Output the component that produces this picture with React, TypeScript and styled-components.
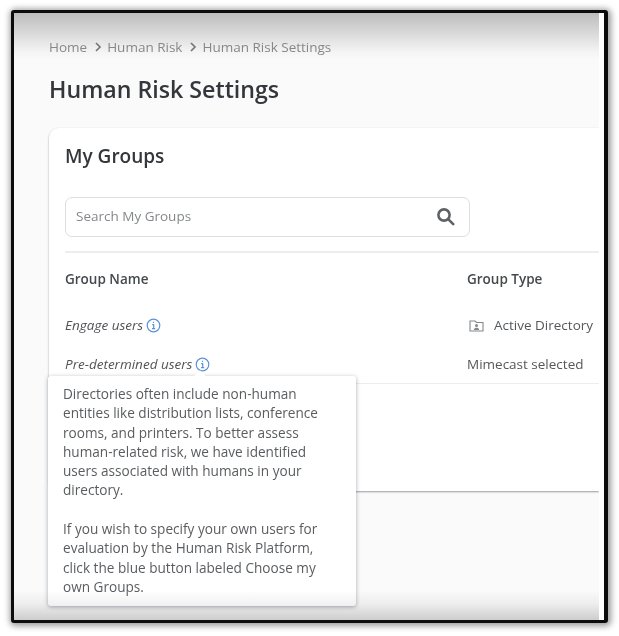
import React from "react";
import styled, { createGlobalStyle } from "styled-components";

const Global = createGlobalStyle`
  html, body { margin: 0; padding: 0; background: #fff; }
  body { width: 619px; height: 636px; overflow: hidden; font-family: "Open Sans", "Liberation Sans", sans-serif; }
`;

const Frame = styled.div`
  box-sizing: border-box;
  margin: 10px 0 0 11px;
  width: 597px;
  height: 613px;
  background: #fff;
  border-style: solid;
  border-color: #0c0c0c;
  border-width: 3px 4px 3px 3px;
  box-shadow: 1px 1px 6px 2px rgba(0, 0, 0, 0.4);
  border-radius: 3px;
  filter: blur(0.6px);
`;

const Screen = styled.div`
  position: relative;
  box-sizing: border-box;
  height: 100%;
  margin-right: 5px;
  overflow: hidden;
  padding: 24px 0 0 35px;
  background: linear-gradient(
    to bottom,
    #bdbdbd 0,
    #d9d9d9 20px,
    #f3f3f3 38px,
    #fafafa 46px
  );
  &::after {
    content: "";
    position: absolute;
    left: 0;
    right: 0;
    bottom: 0;
    height: 30px;
    background: linear-gradient(to bottom, rgba(0, 0, 0, 0), rgba(0, 0, 0, 0.05) 14px, rgba(0, 0, 0, 0.18));
  }
`;

const Crumbs = styled.nav`
  display: flex;
  align-items: center;
  height: 20px;
  font-size: 13.5px;
  color: #85888b;
`;

const CrumbSep = styled.svg`
  width: 9px;
  height: 10px;
  margin: 0 4px 0 7px;
  fill: none;
  stroke: #74777a;
  stroke-width: 1.7;
`;

const Title = styled.h1`
  margin: 15px 0 0;
  height: 38px;
  font-size: 23.2px;
  line-height: 34px;
  font-weight: 600;
  color: #33363a;
`;

const Card = styled.section`
  box-sizing: border-box;
  height: 363px;
  margin-top: 18px;
  padding: 15px 0 0 16px;
  background: #fff;
  border-radius: 10px 0 0 10px;
  box-shadow: 0 1px 2px rgba(60, 64, 70, 0.5);
`;

const CardTitle = styled.h2`
  margin: 0;
  font-size: 19px;
  line-height: 26px;
  font-weight: 600;
  color: #33363a;
`;

const Search = styled.div`
  box-sizing: border-box;
  display: flex;
  align-items: center;
  justify-content: space-between;
  width: 405px;
  height: 40px;
  margin-top: 28px;
  padding: 0 14px 2px 10px;
  border: 1px solid #dcdee0;
  border-radius: 7px;
  font-size: 13.5px;
  color: #85888b;
`;

const SearchIcon = styled.svg`
  width: 19px;
  height: 19px;
  fill: none;
  stroke: #5f6265;
  stroke-width: 2.6;
  stroke-linecap: round;
`;

const Rule = styled.div`
  height: 2px;
  margin-top: 14px;
  background: #eceded;
`;

const Row = styled.div<{ $height: number }>`
  display: grid;
  grid-template-columns: 402px 1fr;
  align-items: center;
  height: ${(p) => p.$height}px;
  font-size: 13.5px;
  color: #55585b;
  white-space: nowrap;
`;

const HeadCell = styled.div`
  font-size: 13.5px;
  font-weight: 600;
  color: #46494c;
`;

const NameCell = styled.div`
  display: flex;
  align-items: center;
  gap: 3px;
  font-style: italic;
  font-size: 13.5px;
  color: #505356;
`;

const TypeCell = styled.div`
  display: flex;
  align-items: center;
  gap: 10px;
  padding-left: 2px;
`;

const InfoIcon = styled.svg`
  width: 15px;
  height: 15px;
  fill: none;
  stroke: #5d93d6;
`;

const FolderIcon = styled.svg`
  width: 15px;
  height: 13px;
  fill: none;
  stroke: #85888b;
`;

const BottomRule = styled.div`
  height: 1px;
  background: #ededee;
`;

const Tooltip = styled.div`
  position: absolute;
  left: 34px;
  top: 363px;
  box-sizing: border-box;
  width: 308px;
  height: 230px;
  padding: 8px 14px 0 15px;
  background: #fff;
  border-radius: 3px;
  box-shadow: 0 1px 4px rgba(60, 70, 90, 0.45);
  font-size: 13.6px;
  line-height: 19.3px;
  color: #5a5d60;
  &::before {
    content: "";
    position: absolute;
    left: 148px;
    top: -4px;
    width: 8px;
    height: 8px;
    background: #fff;
    transform: rotate(45deg);
  }
`;

const TipText = styled.p`
  position: relative;
  margin: 0 0 19.3px;
`;

const Info = () => (
  <InfoIcon viewBox="0 0 15 15">
    <circle cx="7.5" cy="7.5" r="6.3" strokeWidth="1.2" />
    <path d="M6.2 6.6h1.5v4M6 10.7h3.2M7.5 3.7v1.4" strokeWidth="1.2" />
  </InfoIcon>
);

const Sep = () => (
  <CrumbSep viewBox="0 0 9 10">
    <path d="M2 1l4 4-4 4" />
  </CrumbSep>
);

export default function App() {
  return (
    <>
      <Global />
      <Frame>
        <Screen>
          <Crumbs>
            Home
            <Sep />
            Human Risk
            <Sep />
            Human Risk Settings
          </Crumbs>
          <Title>Human Risk Settings</Title>
          <Card>
            <CardTitle>My Groups</CardTitle>
            <Search>
              Search My Groups
              <SearchIcon viewBox="0 0 19 19">
                <circle cx="8" cy="8" r="5.6" />
                <path d="M12.4 12.4l4.8 4.8" />
              </SearchIcon>
            </Search>
            <Rule />
            <Row $height={52}>
              <HeadCell>Group Name</HeadCell>
              <HeadCell>Group Type</HeadCell>
            </Row>
            <Row $height={40}>
              <NameCell>
                Engage users
                <Info />
              </NameCell>
              <TypeCell>
                <FolderIcon viewBox="0 0 15 13">
                  <path d="M1 2v10h13V3.5H7.5L6 2z" strokeWidth="1.1" />
                  <circle cx="7.5" cy="6.5" r="1.5" fill="#85888b" stroke="none" />
                  <path d="M4.8 11c.3-1.9 1.5-2.2 2.7-2.2s2.4.3 2.7 2.2z" fill="#85888b" stroke="none" />
                </FolderIcon>
                Active Directory
              </TypeCell>
            </Row>
            <Row $height={38}>
              <NameCell>
                Pre-determined users
                <Info />
              </NameCell>
              <div>Mimecast selected</div>
            </Row>
            <BottomRule />
          </Card>
          <Tooltip>
            <TipText>
              Directories often include non-human entities like distribution lists, conference rooms, and printers. To better assess human-related risk, we have identified users associated with humans in your directory.
            </TipText>
            <TipText>
              If you wish to specify your own users for evaluation by the Human Risk Platform, click the blue button labeled Choose my own Groups.
            </TipText>
          </Tooltip>
        </Screen>
      </Frame>
    </>
  );
}
